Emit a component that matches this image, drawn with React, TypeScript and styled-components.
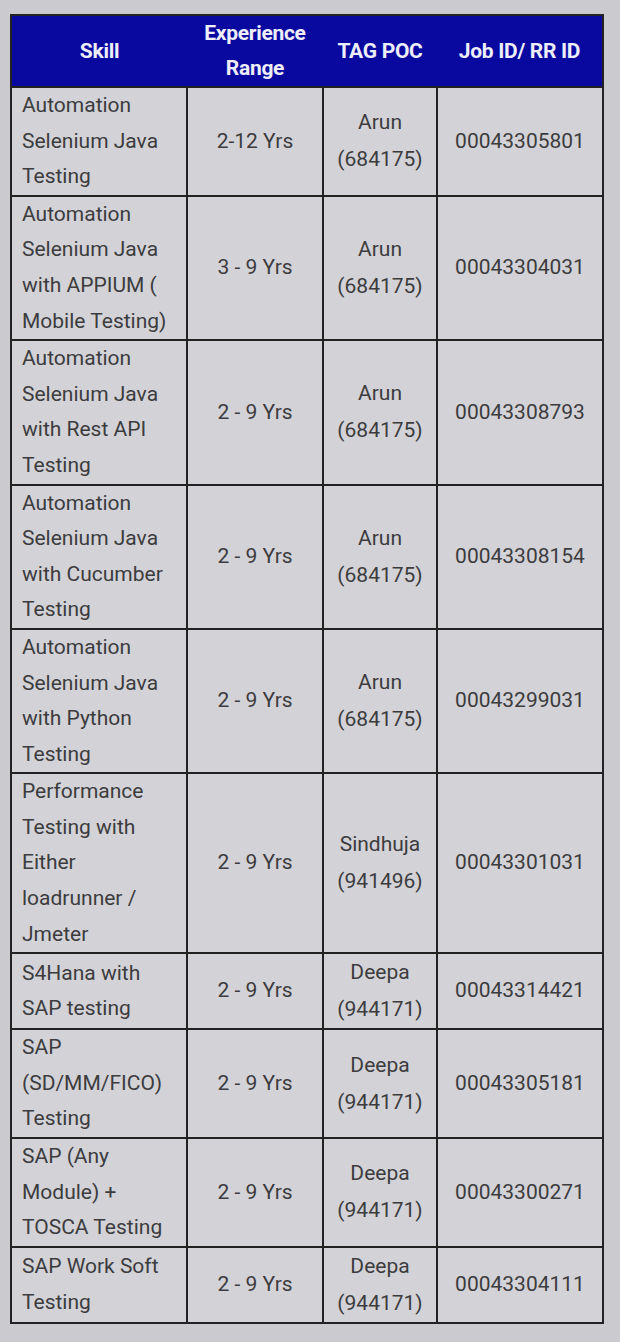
import React from "react";
import styled, { createGlobalStyle } from "styled-components";

const GlobalStyle = createGlobalStyle`
  html, body {
    margin: 0;
    padding: 0;
    background-color: #c8c8cc;
  }
  *, *::before, *::after {
    box-sizing: border-box;
  }
`;

const Page = styled.div`
  width: 620px;
  height: 1342px;
  padding: 14px 0 0 10px;
  background-color: #cbcbcf;
  font-family: Roboto, "Liberation Sans", sans-serif;
  overflow: hidden;
`;

const Table = styled.table`
  border-collapse: collapse;
  width: 592px;
  table-layout: fixed;
  background-color: #d3d3d7;
  border: 2px solid #222;
`;

const HeadCell = styled.th<{ $w: number }>`
  width: ${(p) => p.$w}px;
  height: 70px;
  padding: 0 2px;
  background-color: #0909a0;
  color: #eeeefa;
  font-size: 21px;
  font-weight: 700;
  line-height: 35px;
  letter-spacing: -0.3px;
  text-align: center;
  border: none;
`;

const Cell = styled.td<{ $left?: boolean }>`
  padding: 0 2px 0 ${(p) => (p.$left ? "10px" : "2px")};
  border: 2px solid #222;
  color: #3c3c3e;
  font-size: 21px;
  line-height: 35.6px;
  text-align: ${(p) => (p.$left ? "left" : "center")};
  vertical-align: middle;
  white-space: nowrap;
  overflow: hidden;
`;

const Poc = styled.div`
  line-height: 37px;
`;

interface Row {
  skill: string[];
  exp: string;
  name: string;
  id: string;
  jobId: string;
}

const rows: Row[] = [
  { skill: ["Automation", "Selenium Java", "Testing"], exp: "2-12 Yrs", name: "Arun", id: "684175", jobId: "00043305801" },
  { skill: ["Automation", "Selenium Java", "with APPIUM (", "Mobile Testing)"], exp: "3 - 9 Yrs", name: "Arun", id: "684175", jobId: "00043304031" },
  { skill: ["Automation", "Selenium Java", "with Rest API", "Testing"], exp: "2 - 9 Yrs", name: "Arun", id: "684175", jobId: "00043308793" },
  { skill: ["Automation", "Selenium Java", "with Cucumber", "Testing"], exp: "2 - 9 Yrs", name: "Arun", id: "684175", jobId: "00043308154" },
  { skill: ["Automation", "Selenium Java", "with Python", "Testing"], exp: "2 - 9 Yrs", name: "Arun", id: "684175", jobId: "00043299031" },
  { skill: ["Performance", "Testing with", "Either", "loadrunner /", "Jmeter"], exp: "2 - 9 Yrs", name: "Sindhuja", id: "941496", jobId: "00043301031" },
  { skill: ["S4Hana with", "SAP testing"], exp: "2 - 9 Yrs", name: "Deepa", id: "944171", jobId: "00043314421" },
  { skill: ["SAP", "(SD/MM/FICO)", "Testing"], exp: "2 - 9 Yrs", name: "Deepa", id: "944171", jobId: "00043305181" },
  { skill: ["SAP (Any", "Module) +", "TOSCA Testing"], exp: "2 - 9 Yrs", name: "Deepa", id: "944171", jobId: "00043300271" },
  { skill: ["SAP Work Soft", "Testing"], exp: "2 - 9 Yrs", name: "Deepa", id: "944171", jobId: "00043304111" },
];

const App: React.FC = () => {
  return (
    <Page>
      <GlobalStyle />
      <Table>
        <thead>
          <tr>
            <HeadCell $w={176}>Skill</HeadCell>
            <HeadCell $w={136}>
              Experience
              <br />
              Range
            </HeadCell>
            <HeadCell $w={114}>TAG POC</HeadCell>
            <HeadCell $w={166}>Job ID/ RR ID</HeadCell>
          </tr>
        </thead>
        <tbody>
          {rows.map((r) => (
            <tr key={r.jobId}>
              <Cell $left>
                {r.skill.map((line, i) => (
                  <div key={i}>{line}</div>
                ))}
              </Cell>
              <Cell>{r.exp}</Cell>
              <Cell>
                <Poc>{r.name}</Poc>
                <Poc>({r.id})</Poc>
              </Cell>
              <Cell>{r.jobId}</Cell>
            </tr>
          ))}
        </tbody>
      </Table>
    </Page>
  );
};

export default App;
